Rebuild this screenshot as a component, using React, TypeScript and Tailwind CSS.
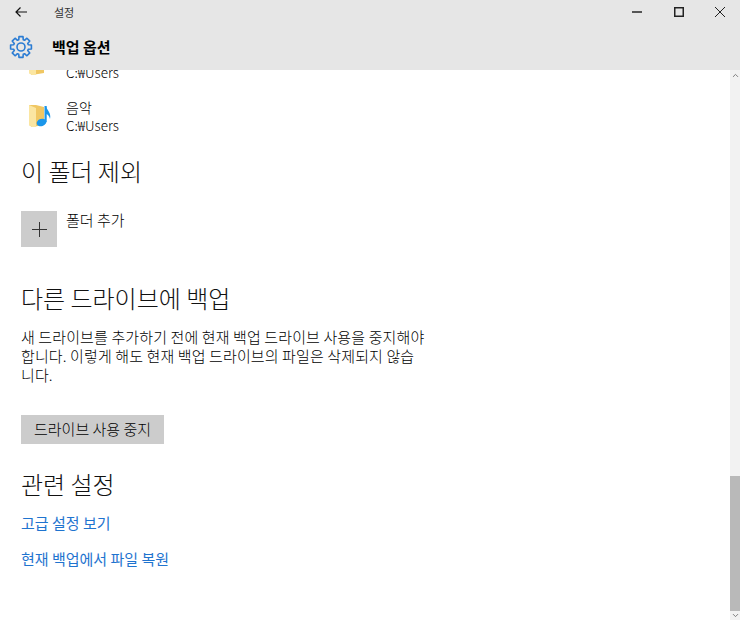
import React from 'react';
import { ChevronUp, ChevronDown } from 'lucide-react';

const FolderIcon = ({ music, className }: { music?: boolean; className?: string }) => (
    <svg width="22" height="24" viewBox="0 0 22 24" className={className}>
        <path d="M0 1 L7 1 L15 3 L15 21 L3 23 L0 21 Z" fill="#f0c763" />
        <path d="M0 1 L7 4 L7 23 L3 23 L0 21 Z" fill="#fbe6a2" />
        {music && (
            <g fill="#1a96ea">
                <ellipse cx="12.5" cy="18.5" rx="5" ry="3.6" transform="rotate(-18 12.5 18.5)" />
                <rect x="15.5" y="2" width="2.2" height="16" />
                <path d="M17 2 C17.5 6 22.5 8 21 15 C20 11.5 19 10.5 17 10 Z" />
            </g>
        )}
    </svg>
);

// eight square teeth, same shape as the Windows settings glyph
const gearPath = () => {
    const pts: string[] = [];
    for (let i = 0; i < 8; i++) {
        const a = (i * Math.PI) / 4;
        [[-0.3, 7.6], [-0.19, 10.6], [0.19, 10.6], [0.3, 7.6]].forEach(([d, r]) => {
            pts.push(`${(12 + r * Math.sin(a + d)).toFixed(2)} ${(12 - r * Math.cos(a + d)).toFixed(2)}`);
        });
    }
    return `M${pts.join(' L')} Z`;
};

const App: React.FC = () => {
    return (
        <div className="w-[740px] h-[620px] flex flex-col bg-white overflow-hidden text-black font-['Noto_Sans_CJK_KR','Noto_Sans',sans-serif]">
            <header className="h-[70px] shrink-0 bg-[#e6e6e6] flex flex-col">
                <div className="h-[24px] flex items-center">
                    <svg width="12" height="10" viewBox="0 0 12 10" className="ml-[15px]" fill="none" stroke="#111" strokeWidth="1.2">
                        <path d="M12 5 H1 M5.5 0.5 L1 5 L5.5 9.5" />
                    </svg>
                    <span className="ml-[27px] text-[11px] leading-[16px] text-[#333]">설정</span>
                    <div className="ml-auto flex items-center">
                        <svg width="10" height="2" viewBox="0 0 10 2" className="mr-[32px]"><rect width="10" height="2" fill="#555" /></svg>
                        <svg width="10" height="10" viewBox="0 0 10 10" className="mr-[31px]"><rect x="0.75" y="0.75" width="8.5" height="8.5" fill="none" stroke="#222" strokeWidth="1.5" /></svg>
                        <svg width="10" height="10" viewBox="0 0 10 10" className="mr-[15px]"><path d="M0 0 L10 10 M10 0 L0 10" stroke="#222" strokeWidth="1" /></svg>
                    </div>
                </div>
                <div className="flex-1 flex items-center">
                    <svg width="24" height="24" viewBox="0 0 24 24" className="ml-[9px] text-[#2b7cd3]" fill="none" stroke="currentColor" strokeWidth="1.6">
                        <path d={gearPath()} strokeLinejoin="round" />
                        <circle cx="12" cy="12" r="4" />
                    </svg>
                    <span className="ml-[19px] text-[15px] leading-[22px] font-bold">백업 옵션</span>
                </div>
            </header>

            <div className="flex-1 flex min-h-0">
                <main className="flex-1 overflow-hidden pl-[21px]">
                    <div className="-mt-[7px] pl-[8px] flex items-start">
                        <FolderIcon className="-mt-[11px]" />
                        <div className="ml-[15px] text-[13.5px] leading-[18px] font-light">C:₩Users</div>
                    </div>
                    <div className="mt-[17px] pl-[8px] flex items-center">
                        <FolderIcon music />
                        <div className="ml-[15px] leading-[18px] font-light">
                            <div className="text-[14px]">음악</div>
                            <div className="text-[13.5px]">C:₩Users</div>
                        </div>
                    </div>

                    <h2 className="mt-[21px] text-[24px] leading-[32px] font-light text-[#111]">이 폴더 제외</h2>
                    <div className="mt-[24px] flex items-start">
                        <div className="w-[36px] h-[36px] bg-[#cccccc] flex items-center justify-center">
                            <svg width="15" height="15" viewBox="0 0 15 15"><path d="M0 7.5 H15 M7.5 0 V15" stroke="#333" strokeWidth="1" /></svg>
                        </div>
                        <span className="ml-[9px] text-[15px] leading-[18px] font-light">폴더 추가</span>
                    </div>

                    <h2 className="mt-[35px] text-[24px] leading-[32px] font-light text-[#111]">다른 드라이브에 백업</h2>
                    <p className="mt-[13px] w-[404px] text-[15px] leading-[19px] font-light tracking-[0.12px]">
                        새 드라이브를 추가하기 전에 현재 백업 드라이브 사용을 중지해야 합니다. 이렇게 해도 현재 백업 드라이브의 파일은 삭제되지 않습니다.
                    </p>
                    <button className="mt-[31px] h-[29px] w-[143px] bg-[#cccccc] text-[15px] font-light text-black block">드라이브 사용 중지</button>

                    <h2 className="mt-[24px] text-[24px] leading-[32px] font-light text-[#111]">관련 설정</h2>
                    <a className="block mt-[14px] text-[15px] leading-[18px] text-[#1f74cf]">고급 설정 보기</a>
                    <a className="block mt-[18px] text-[15px] leading-[18px] text-[#1f74cf]">현재 백업에서 파일 복원</a>
                </main>

                <div className="w-[10px] shrink-0 bg-[#f2f2f2] flex flex-col">
                    <div className="h-[10px] flex items-center justify-center">
                        <ChevronUp className="w-[9px] h-[9px] text-[#777]" strokeWidth={2.5} />
                    </div>
                    <div className="flex-1 flex flex-col justify-end">
                        <div className="h-[135px] bg-[#b9b9b9]" />
                    </div>
                    <div className="h-[9px] flex items-center justify-center">
                        <ChevronDown className="w-[9px] h-[9px] text-[#777]" strokeWidth={2.5} />
                    </div>
                </div>
            </div>
        </div>
    );
};

export default App;
